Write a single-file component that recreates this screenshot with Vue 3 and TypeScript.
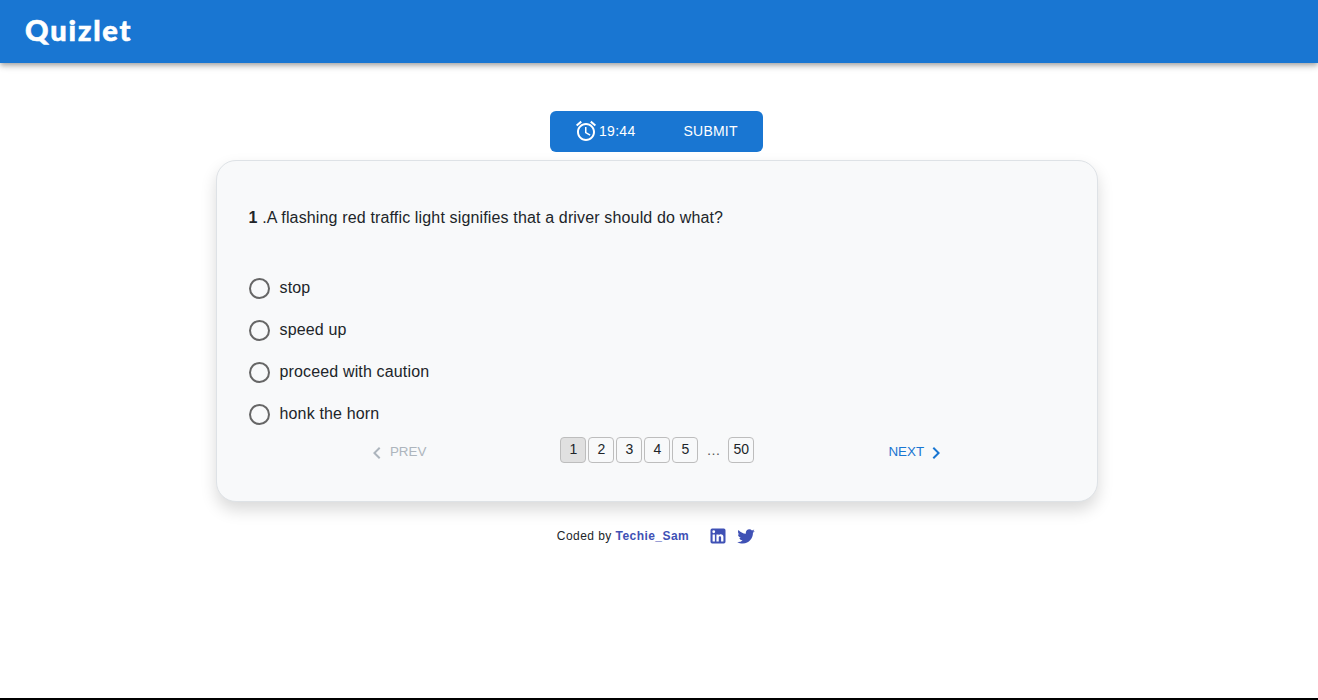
<script setup lang="ts">
const options: string[] = ['stop', 'speed up', 'proceed with caution', 'honk the horn']
const pages: string[] = ['1', '2', '3', '4', '5']
</script>

<template>
  <div class="page">
    <header class="topbar"><span class="logo">Quizlet</span></header>
    <main class="content">
      <div class="timer-bar">
        <span class="timer">
          <svg class="clock" viewBox="0 0 24 24" width="24" height="24"><path fill="currentColor" d="M22 5.72l-4.6-3.86-1.29 1.53 4.6 3.86L22 5.72zM7.88 3.39 6.6 1.86 2 5.71l1.29 1.53 4.59-3.85zM12.5 8H11v6l4.75 2.85.75-1.23-4-2.37V8zM12 4c-4.97 0-9 4.03-9 9s4.03 9 9 9 9-4.03 9-9-4.03-9-9-9zm0 16c-3.87 0-7-3.13-7-7s3.13-7 7-7 7 3.13 7 7-3.13 7-7 7z"/></svg>
          <span class="time">19:44</span>
        </span>
        <span class="submit">SUBMIT</span>
      </div>
      <section class="card">
        <p class="question"><b>1</b> .A flashing red traffic light signifies that a driver should do what?</p>
        <ul class="options">
          <li v-for="o in options" :key="o" class="option">
            <span class="radio"></span>
            <span>{{ o }}</span>
          </li>
        </ul>
        <nav class="pager">
          <span class="nav prev">
            <svg viewBox="0 0 24 24" width="24" height="24"><path fill="currentColor" d="M15.41 7.41 14 6l-6 6 6 6 1.41-1.41L10.83 12z"/></svg>
            <span>PREV</span>
          </span>
          <div class="pages">
            <span v-for="p in pages" :key="p" class="pg" :class="{ active: p === '1' }">{{ p }}</span>
            <span class="dots">…</span>
            <span class="pg">50</span>
          </div>
          <span class="nav next">
            <span>NEXT</span>
            <svg viewBox="0 0 24 24" width="24" height="24"><path fill="currentColor" d="M10 6 8.59 7.41 13.17 12l-4.58 4.59L10 18l6-6z"/></svg>
          </span>
        </nav>
      </section>
      <footer class="credit">
        <span class="coded">Coded by <b>Techie_Sam</b></span>
        <span class="socials">
          <svg viewBox="0 0 24 24" width="20" height="20"><path fill="currentColor" d="M19 3a2 2 0 0 1 2 2v14a2 2 0 0 1-2 2H5a2 2 0 0 1-2-2V5a2 2 0 0 1 2-2h14m-.5 15.5v-5.3a3.26 3.26 0 0 0-3.26-3.26c-.85 0-1.84.52-2.32 1.3v-1.11h-2.79v8.37h2.79v-4.93c0-.77.62-1.4 1.39-1.4a1.4 1.4 0 0 1 1.4 1.4v4.93h2.79M6.88 8.56a1.68 1.68 0 0 0 1.68-1.68c0-.93-.75-1.69-1.68-1.69a1.69 1.69 0 0 0-1.69 1.69c0 .93.76 1.68 1.69 1.68m1.39 9.94v-8.37H5.5v8.37h2.77z"/></svg>
          <svg viewBox="0 0 24 24" width="20" height="20"><path fill="currentColor" d="M22.46 6c-.77.35-1.6.58-2.46.69.88-.53 1.56-1.37 1.88-2.38-.83.5-1.75.85-2.72 1.05C18.37 4.5 17.26 4 16 4c-2.35 0-4.27 1.92-4.27 4.29 0 .34.04.67.11.98C8.28 9.09 5.11 7.38 3 4.79c-.37.63-.58 1.37-.58 2.15 0 1.49.75 2.81 1.91 3.56-.71 0-1.37-.2-1.95-.5v.03c0 2.08 1.48 3.82 3.44 4.21a4.22 4.22 0 0 1-1.93.07 4.28 4.28 0 0 0 4 2.98 8.521 8.521 0 0 1-5.33 1.84c-.34 0-.68-.02-1.02-.06C3.44 20.29 5.7 21 8.12 21 16 21 20.33 14.46 20.33 8.79c0-.19 0-.37-.01-.56.84-.6 1.56-1.36 2.14-2.23z"/></svg>
        </span>
      </footer>
    </main>
  </div>
</template>

<style>
html, body { margin: 0; background: #fff; }
</style>

<style scoped>
.page {
  height: 698px;
  border-bottom: 2px solid #000;
  font-family: "Liberation Sans", Arial, sans-serif;
  color: #212529;
  overflow: hidden;
}
.topbar {
  height: 63px;
  background: #1976d2;
  box-shadow: 0 2px 4px -1px rgba(0,0,0,.2), 0 4px 5px 0 rgba(0,0,0,.14), 0 1px 10px 0 rgba(0,0,0,.12);
  display: flex;
  align-items: center;
  padding-left: 25px;
  padding-bottom: 4px;
  box-sizing: border-box;
}
.logo {
  font-family: Lato, sans-serif;
  font-weight: 900;
  font-size: 29px;
  color: #fff;
  letter-spacing: 1.85px;
  -webkit-text-stroke: 0.6px #fff;
}
.content {
  display: flex;
  flex-direction: column;
  align-items: center;
  padding-top: 48px;
  padding-right: 5px;
}
.timer-bar {
  width: 213px;
  height: 41px;
  background: #1976d2;
  color: #fff;
  border-radius: 6px;
  display: flex;
  align-items: center;
  box-sizing: border-box;
  padding-left: 24px;
  padding-bottom: 1px;
  font-size: 14px;
}
.timer { display: flex; align-items: center; gap: 1px; letter-spacing: .3px; }
.clock { display: block; }
.time { padding-bottom: 1px; }
.submit { margin-left: 48px; letter-spacing: .2px; }
.card {
  width: 882px;
  height: 342px;
  margin-top: 8px;
  box-sizing: border-box;
  background: #f8f9fa;
  border: 1px solid #dee2e6;
  border-radius: 20px;
  box-shadow: 0 8px 16px rgba(0,0,0,.15);
  padding: 48px 32px 0;
  font-size: 16px;
  letter-spacing: .15px;
}
.question { margin: 0; line-height: 18px; color: #212529; }
.options { list-style: none; margin: 40px 0 0; padding: 0; }
.option {
  height: 42px;
  display: flex;
  align-items: center;
  gap: 10px;
}
.radio {
  width: 21px;
  height: 21px;
  box-sizing: border-box;
  border: 2px solid #666;
  border-radius: 50%;
}
.pager {
  display: flex;
  align-items: center;
  justify-content: center;
  gap: 134px;
  height: 26px;
  margin-top: 2px;
  letter-spacing: 0;
}
.pages { display: flex; gap: 2px; align-items: center; }
.pg {
  min-width: 26px;
  height: 26px;
  box-sizing: border-box;
  padding-bottom: 2px;
  border: 1px solid #bdbdbd;
  border-radius: 4px;
  display: flex;
  align-items: center;
  justify-content: center;
  font-size: 14px;
}
.pg.active { background: #e0e0e0; }
.dots { width: 26px; text-align: center; font-size: 14px; color: #555; }
.nav { display: flex; align-items: center; font-size: 13.4px; margin-top: 2px; }
.nav svg { margin-top: 4px; display: block; }
.prev { color: #adb5bd; gap: 1px; }
.next { color: #1976d2; gap: 0; }
.credit { display: flex; align-items: center; margin-top: 24px; font-size: 12px; height: 20px; letter-spacing: .45px; }
.coded b { color: #3f51b5; }
.socials { display: flex; gap: 8px; margin-left: 19px; color: #3f51b5; }
.socials svg { display: block; }
</style>
